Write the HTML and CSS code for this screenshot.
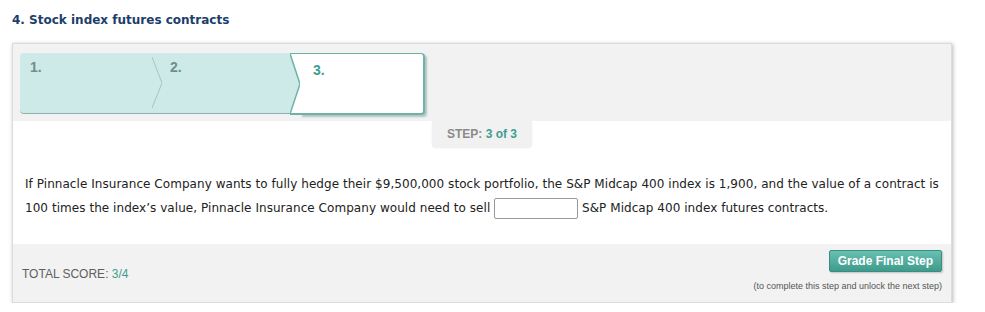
FILE: index.html
```html
<!DOCTYPE html>
<html lang="en">
<head>
    <meta charset="UTF-8">
    <title>Stock index futures contracts</title>
    <link rel="stylesheet" href="styles.css">
</head>
<body>
    <!-- Question title -->
    <h2 class="q-title">4. Stock index futures contracts</h2>

    <div class="card">
        <!-- Step tabs -->
        <div class="card-top">
            <div class="steps">
                <div class="step step-1">1.</div>
                <svg class="sep" width="10" height="61" viewBox="0 0 10 61">
                    <polyline points="0,4 10,30 0,55" fill="none" stroke="#a6c4c1" stroke-width="1"/>
                </svg>
                <div class="step step-2">2.</div>
                <svg class="sep" width="10" height="62" viewBox="0 0 10 62">
                    <polygon points="0,0 10,0 10,62 0,62 10,31" fill="#fff"/>
                    <polyline points="0,0.5 10,0.5" fill="none" stroke="#6db4a6" stroke-width="1"/>
                    <polyline points="0,0.5 10,31 0,61" fill="none" stroke="#6db4a6" stroke-width="1.5"/>
                    <polyline points="0,61 10,61" fill="none" stroke="#6db4a6" stroke-width="2"/>
                </svg>
                <div class="step step-3">3.</div>
            </div>
        </div>

        <!-- Question body -->
        <div class="card-body">
            <div class="step-label">STEP: <span class="teal">3 of 3</span></div>
            <p class="question">
                If Pinnacle Insurance Company wants to fully hedge their $9,500,000 stock portfolio, the S&amp;P Midcap 400 index is 1,900, and the value of a contract is
                100 times the index’s value, Pinnacle Insurance Company would need to sell <input type="text" class="answer"> S&amp;P Midcap 400 index futures contracts.
            </p>
        </div>

        <!-- Footer -->
        <div class="card-foot">
            <div class="score">TOTAL SCORE: <span class="teal">3/4</span></div>
            <div class="actions">
                <button class="grade-btn">Grade Final Step</button>
                <div class="hint">(to complete this step and unlock the next step)</div>
            </div>
        </div>
    </div>
</body>
</html>
```

FILE: styles.css
```css
* {
    margin: 0;
    padding: 0;
    box-sizing: border-box;
}

body {
    background: #fff;
    font-family: "Liberation Sans", Arial, sans-serif;
    color: #333;
    padding: 12px 33px 0 12px;
}

.teal {
    color: #3f9e91;
}

.q-title {
    font-family: "DejaVu Sans", Verdana, sans-serif;
    font-size: 12px;
    line-height: 16px;
    font-weight: bold;
    color: #1d3e6c;
    margin-bottom: 15px;
}

/* Card */
.card {
    width: 940px;
    border: 1px solid #dcdcdc;
    box-shadow: 1px 1px 4px rgba(0, 0, 0, 0.28);
}

.card-top {
    background: #f2f2f2;
    padding: 9px 7px 7px;
}

.steps {
    display: flex;
    align-items: flex-start;
    width: 405px;
    height: 61px;
    background: #cdeae8;
    border-radius: 4px;
    border-bottom: 1px solid #8fb0ac;
}

.step {
    font-size: 14px;
    font-weight: bold;
    color: #6e8f8c;
    padding-top: 6px;
}

.step-1 {
    width: 132px;
    padding-left: 10px;
}

.step-2 {
    width: 128px;
    padding-left: 8px;
}

.step-3 {
    width: 125px;
    height: 62px;
    background: #fff;
    color: #3a9f92;
    padding: 8px 0 0 13px;
    border: 1px solid #6db4a6;
    border-left: none;
    border-right-width: 2px;
    border-bottom-width: 2px;
    border-radius: 0 4px 4px 0;
    box-shadow: 2px 2px 2px rgba(60, 110, 100, 0.35);
}

.sep {
    flex: none;
    display: block;
}

/* Body */
.card-body {
    background: #fff;
    padding: 0 12px 24px;
}

.step-label {
    width: fit-content;
    margin: 0 auto;
    background: #f1f1f1;
    padding: 5px 15px;
    border-radius: 0 0 4px 4px;
    box-shadow: 0 1px 2px rgba(0, 0, 0, 0.08);
    font-size: 12px;
    line-height: 16px;
    font-weight: bold;
    color: #8a8a8a;
}

.question {
    margin-top: 25px;
    font-family: "DejaVu Sans", Verdana, sans-serif;
    font-size: 12px;
    line-height: 24px;
    letter-spacing: 0.05px;
    color: #222;
}

.answer {
    width: 84px;
    height: 21px;
    border: 1px solid #999;
    border-radius: 2px;
    vertical-align: middle;
}

/* Footer */
.card-foot {
    background: #f2f2f2;
    display: flex;
    justify-content: space-between;
    padding: 6px 9px 8px 9px;
    height: 58px;
}

.score {
    font-size: 12px;
    color: #5f5f5f;
    align-self: center;
    padding-top: 4px;
}

.actions {
    display: flex;
    flex-direction: column;
    align-items: flex-end;
}

.grade-btn {
    font-family: "Liberation Sans", Arial, sans-serif;
    font-size: 12px;
    font-weight: bold;
    color: #fff;
    background: linear-gradient(#67c0b1, #3f9b8b);
    border: 1px solid #3b8d7f;
    border-radius: 2px;
    padding: 0 8px;
    height: 22px;
    box-shadow: 1px 1px 2px rgba(0, 0, 0, 0.2);
}

.hint {
    font-size: 9px;
    color: #555;
    margin-top: 9px;
}
```
